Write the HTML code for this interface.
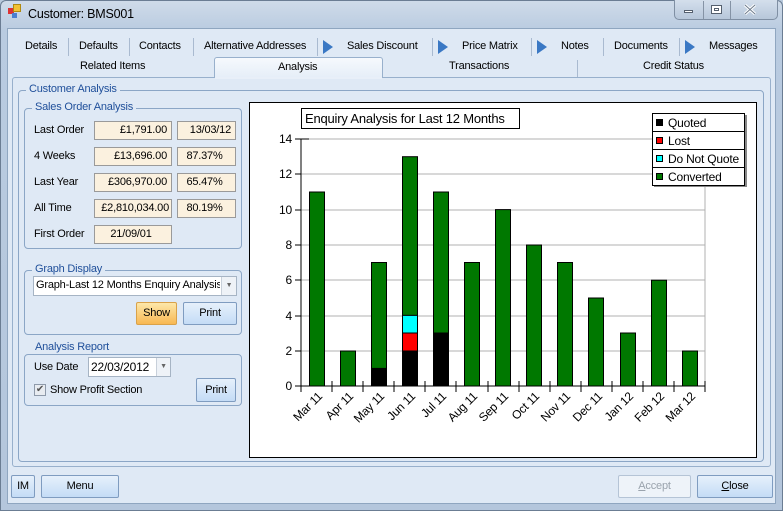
<!DOCTYPE html>
<html><head><meta charset="utf-8"><style>
*{box-sizing:border-box;margin:0;padding:0}
body{width:783px;height:511px;overflow:hidden;font-family:"Liberation Sans",sans-serif;font-size:11px;letter-spacing:-0.2px;color:#000;background:#b8c9dc}
.a{position:absolute}
#win{left:0;top:0;width:783px;height:511px;background:linear-gradient(#cfdbe9,#b9cbe0 30px,#b4c6dc);border:1px solid #6b7d93;border-radius:6px 6px 0 0}
#client{left:7px;top:28px;width:769px;height:476px;background:#dfe9f5;border:1px solid #8fa6c0}
.t{white-space:nowrap;font-size:11px}
.sep{width:1px;height:18px;background:#a9bad0}
.arr{width:0;height:0;border-top:7px solid transparent;border-bottom:7px solid transparent;border-left:10px solid #3a78c4}
.grp{border:1px solid #8ba6c6;border-radius:4px}
.leg{background:#dfe9f5;padding:0 3px;color:#1f4f9a;font-size:11px}
.box{background:#fbf1df;border:1px solid #9a9a9a;text-align:right;padding-right:4px;font-size:11px;line-height:17px;white-space:nowrap;overflow:hidden}
.btn{border:1px solid #7f9cc0;background:linear-gradient(#e6f0fb,#c4dcf6);text-align:center;font-size:11px;border-radius:2px}
</style></head><body>
<div id="win" class="a"></div>
<div class="a" style="left:8px;top:8px;width:6px;height:6px;background:#d33"></div>
<div class="a" style="left:13px;top:4px;width:8px;height:8px;background:#f2c233;border:1px solid #b08a10"></div>
<div class="a" style="left:12px;top:13px;width:5px;height:5px;background:#4a7fd0"></div>
<div class="a t" style="left:28px;top:7px;font-size:12.5px">Customer: BMS001</div>
<div class="a" style="left:674px;top:0;width:104px;height:20px;border:1px solid #7f8fa3;border-top:none;border-radius:0 0 5px 5px;background:linear-gradient(#d4dfec,#b7c7da)"></div>
<div class="a" style="left:703px;top:1px;width:1px;height:18px;background:#8593a5"></div>
<div class="a" style="left:730px;top:1px;width:1px;height:18px;background:#8593a5"></div>
<div class="a" style="left:684px;top:10px;width:9px;height:3px;background:#fff;border:1px solid #55606e"></div>
<div class="a" style="left:711px;top:5px;width:11px;height:9px;border:1px solid #55606e;background:#fff"><div style="margin:2px;height:3px;border:1px solid #55606e"></div></div>
<svg class="a" style="left:744px;top:4px" width="12" height="11"><path d="M1 1 L11 10 M11 1 L1 10" stroke="#fff" stroke-width="3"/><path d="M1 1 L11 10 M11 1 L1 10" stroke="#6d7b8c" stroke-width="1"/></svg>

<div id="client" class="a"></div>
<div class="a t" style="left:25px;top:40px">Details</div>
<div class="a sep" style="left:68px;top:38px"></div>
<div class="a t" style="left:79px;top:40px">Defaults</div>
<div class="a sep" style="left:129px;top:38px"></div>
<div class="a t" style="left:139px;top:40px">Contacts</div>
<div class="a sep" style="left:193px;top:38px"></div>
<div class="a t" style="left:204px;top:40px">Alternative Addresses</div>
<div class="a sep" style="left:317px;top:38px"></div>
<div class="a arr" style="left:323px;top:40px"></div>
<div class="a t" style="left:347px;top:40px">Sales Discount</div>
<div class="a sep" style="left:432px;top:38px"></div>
<div class="a arr" style="left:438px;top:40px"></div>
<div class="a t" style="left:462px;top:40px">Price Matrix</div>
<div class="a sep" style="left:531px;top:38px"></div>
<div class="a arr" style="left:537px;top:40px"></div>
<div class="a t" style="left:561px;top:40px">Notes</div>
<div class="a sep" style="left:603px;top:38px"></div>
<div class="a t" style="left:614px;top:40px">Documents</div>
<div class="a sep" style="left:679px;top:38px"></div>
<div class="a arr" style="left:685px;top:40px"></div>
<div class="a t" style="left:709px;top:40px">Messages</div>
<div class="a t" style="left:80px;top:60px">Related Items</div>
<div class="a" style="left:214px;top:57px;width:169px;height:22px;background:linear-gradient(#f6f9fd,#e4edf7);border:1px solid #98b0cc;border-bottom:none;border-radius:3px 3px 0 0"></div>
<div class="a t" style="left:278px;top:61px">Analysis</div>
<div class="a t" style="left:449px;top:60px">Transactions</div>
<div class="a" style="left:577px;top:60px;width:1px;height:17px;background:#a9bad0"></div>
<div class="a t" style="left:643px;top:60px">Credit Status</div>
<div class="a" style="left:12px;top:77px;width:759px;height:390px;border:1px solid #98b0cc;border-radius:3px;background:#dfe9f5"></div>
<div class="a" style="left:215px;top:77px;width:167px;height:2px;background:#e8eff8"></div>
<div class="a grp" style="left:18px;top:90px;width:746px;height:372px"></div>
<div class="a leg" style="left:26px;top:83px">Customer Analysis</div>

<div class="a grp" style="left:24px;top:108px;width:218px;height:141px"></div>
<div class="a leg" style="left:32px;top:101px">Sales Order Analysis</div>
<div class="a t" style="left:34px;top:124px">Last Order</div>
<div class="a box" style="left:94px;top:121px;width:78px;height:19px">£1,791.00</div>
<div class="a box" style="left:177px;top:121px;width:59px;height:19px">13/03/12</div>
<div class="a t" style="left:34px;top:150px">4 Weeks</div>
<div class="a box" style="left:94px;top:147px;width:78px;height:19px">£13,696.00</div>
<div class="a box" style="left:177px;top:147px;width:59px;height:19px;text-align:center">87.37%</div>
<div class="a t" style="left:34px;top:176px">Last Year</div>
<div class="a box" style="left:94px;top:173px;width:78px;height:19px">£306,970.00</div>
<div class="a box" style="left:177px;top:173px;width:59px;height:19px;text-align:center">65.47%</div>
<div class="a t" style="left:34px;top:202px">All Time</div>
<div class="a box" style="left:94px;top:199px;width:78px;height:19px;padding-right:2px">£2,810,034.00</div>
<div class="a box" style="left:177px;top:199px;width:59px;height:19px;text-align:center">80.19%</div>
<div class="a t" style="left:34px;top:228px">First Order</div>
<div class="a box" style="left:94px;top:225px;width:78px;height:19px;text-align:center">21/09/01</div>

<div class="a grp" style="left:24px;top:270px;width:218px;height:65px"></div>
<div class="a leg" style="left:32px;top:263px">Graph Display</div>
<div class="a" style="left:33px;top:276px;width:204px;height:20px;background:#fff;border:1px solid #a6b4c4"></div>
<div class="a t" style="left:36px;top:279px;width:184px;overflow:hidden">Graph-Last 12 Months Enquiry Analysis</div>
<div class="a" style="left:221px;top:277px;width:15px;height:18px;background:#eef2f7;border-left:1px solid #c8d0da;color:#666;font-size:7px;text-align:center;line-height:18px">▼</div>
<div class="a btn" style="left:136px;top:302px;width:41px;height:23px;line-height:21px;background:linear-gradient(#fde7a9,#f8b853);border-color:#d9a24a">Show</div>
<div class="a btn" style="left:183px;top:302px;width:54px;height:23px;line-height:21px">Print</div>

<div class="a grp" style="left:24px;top:354px;width:218px;height:52px"></div>
<div class="a leg" style="left:32px;top:341px">Analysis Report</div>
<div class="a t" style="left:34px;top:361px">Use Date</div>
<div class="a" style="left:88px;top:357px;width:83px;height:20px;background:#fff;border:1px solid #a6b4c4"></div>
<div class="a t" style="left:91px;top:360px;font-size:12px">22/03/2012</div>
<div class="a" style="left:156px;top:358px;width:14px;height:18px;background:#eef2f7;border-left:1px solid #c8d0da;color:#666;font-size:7px;text-align:center;line-height:18px">▼</div>
<div class="a" style="left:34px;top:384px;width:12px;height:12px;border:1px solid #8e9aaa;background:#e8ecf1;font-size:10px;line-height:10px;text-align:center;color:#555">✔</div>
<div class="a t" style="left:50px;top:384px">Show Profit Section</div>
<div class="a btn" style="left:196px;top:378px;width:40px;height:24px;line-height:22px">Print</div>

<svg class="a" style="left:249px;top:102px" width="509" height="356" viewBox="249 102 509 356" font-family="Liberation Sans, sans-serif" font-size="12">
<rect x="249.5" y="102.5" width="507" height="355" fill="#fff" stroke="#000"/>
<g stroke="#b0b0b0">
<line x1="301" y1="139" x2="705" y2="139"/><line x1="301" y1="174" x2="705" y2="174"/><line x1="301" y1="210" x2="705" y2="210"/><line x1="301" y1="245" x2="705" y2="245"/><line x1="301" y1="280" x2="705" y2="280"/><line x1="301" y1="316" x2="705" y2="316"/><line x1="301" y1="351" x2="705" y2="351"/><line x1="705" y1="139" x2="705" y2="386"/>
</g>
<g stroke="#000" fill="#007800">
<rect x="309.5" y="192" width="15" height="194"/>
<rect x="340.5" y="351" width="15" height="35"/>
<rect x="371.5" y="262.5" width="15" height="106"/>
<rect x="371.5" y="368.4" width="15" height="17.6" fill="#000"/>
<rect x="402.5" y="156.7" width="15" height="158.7"/>
<rect x="402.5" y="315.4" width="15" height="17.6" fill="#00ffff"/>
<rect x="402.5" y="333" width="15" height="18" fill="#f00"/>
<rect x="402.5" y="351" width="15" height="35" fill="#000"/>
<rect x="433.5" y="192" width="15" height="141"/>
<rect x="433.5" y="333" width="15" height="53" fill="#000"/>
<rect x="464.5" y="262.5" width="15" height="123.5"/>
<rect x="495.5" y="209.6" width="15" height="176.4"/>
<rect x="526.5" y="245" width="15" height="141"/>
<rect x="557.5" y="262.5" width="15" height="123.5"/>
<rect x="588.5" y="298" width="15" height="88"/>
<rect x="620.5" y="333" width="15" height="53"/>
<rect x="651.5" y="280.2" width="15" height="105.8"/>
<rect x="682.5" y="351" width="15" height="35"/>
</g>
<g stroke="#000">
<line x1="301" y1="139" x2="301" y2="392"/><line x1="295" y1="386" x2="705" y2="386"/>
<line x1="295" y1="139" x2="309" y2="139"/><line x1="295" y1="174" x2="301" y2="174"/><line x1="295" y1="210" x2="301" y2="210"/><line x1="295" y1="245" x2="301" y2="245"/><line x1="295" y1="280" x2="301" y2="280"/><line x1="295" y1="316" x2="301" y2="316"/><line x1="295" y1="351" x2="301" y2="351"/>
<line x1="332" y1="381" x2="332" y2="392"/><line x1="363" y1="381" x2="363" y2="392"/><line x1="394" y1="381" x2="394" y2="392"/><line x1="425" y1="381" x2="425" y2="392"/><line x1="456" y1="381" x2="456" y2="392"/><line x1="488" y1="381" x2="488" y2="392"/><line x1="519" y1="381" x2="519" y2="392"/><line x1="550" y1="381" x2="550" y2="392"/><line x1="581" y1="381" x2="581" y2="392"/><line x1="612" y1="381" x2="612" y2="392"/><line x1="643" y1="381" x2="643" y2="392"/><line x1="674" y1="381" x2="674" y2="392"/><line x1="705" y1="381" x2="705" y2="392"/>
</g>
<g text-anchor="end">
<text x="292" y="143">14</text><text x="292" y="178">12</text><text x="292" y="214">10</text><text x="292" y="249">8</text><text x="292" y="284">6</text><text x="292" y="320">4</text><text x="292" y="355">2</text><text x="292" y="390">0</text>
<text transform="translate(323,397) rotate(-45)">Mar 11</text>
<text transform="translate(354,397) rotate(-45)">Apr 11</text>
<text transform="translate(385,397) rotate(-45)">May 11</text>
<text transform="translate(416,397) rotate(-45)">Jun 11</text>
<text transform="translate(447,397) rotate(-45)">Jul 11</text>
<text transform="translate(478,397) rotate(-45)">Aug 11</text>
<text transform="translate(509,397) rotate(-45)">Sep 11</text>
<text transform="translate(540,397) rotate(-45)">Oct 11</text>
<text transform="translate(571,397) rotate(-45)">Nov 11</text>
<text transform="translate(603,397) rotate(-45)">Dec 11</text>
<text transform="translate(634,397) rotate(-45)">Jan 12</text>
<text transform="translate(665,397) rotate(-45)">Feb 12</text>
<text transform="translate(696,397) rotate(-45)">Mar 12</text>
</g>
<rect x="301.5" y="108.5" width="218" height="20" fill="#fff" stroke="#000"/>
<text x="305" y="123" font-size="13">Enquiry Analysis for Last 12 Months</text>
<rect x="654" y="115" width="93" height="72" fill="#888"/>
<rect x="652.5" y="113.5" width="92" height="72" fill="#fff" stroke="#000"/>
<g stroke="#000"><line x1="652" y1="131.5" x2="745" y2="131.5"/><line x1="652" y1="149.5" x2="745" y2="149.5"/><line x1="652" y1="167.5" x2="745" y2="167.5"/></g>
<rect x="656.5" y="119.5" width="6" height="6" fill="#000" stroke="#000"/>
<rect x="656.5" y="137.5" width="6" height="6" fill="#f00" stroke="#000"/>
<rect x="656.5" y="155.5" width="6" height="6" fill="#0ff" stroke="#000"/>
<rect x="656.5" y="173.5" width="6" height="6" fill="#007800" stroke="#000"/>
<text x="668" y="127">Quoted</text><text x="668" y="145">Lost</text><text x="668" y="163">Do Not Quote</text><text x="668" y="181">Converted</text>
</svg>

<div class="a btn" style="left:11px;top:475px;width:24px;height:23px;line-height:21px">IM</div>
<div class="a btn" style="left:41px;top:475px;width:78px;height:23px;line-height:21px">Menu</div>
<div class="a btn" style="left:618px;top:475px;width:73px;height:23px;line-height:21px;background:#eef3f9;border-color:#b5c4d6;color:#9aa3ad"><u>A</u>ccept</div>
<div class="a btn" style="left:697px;top:475px;width:76px;height:23px;line-height:21px"><u>C</u>lose</div>
</body></html>
